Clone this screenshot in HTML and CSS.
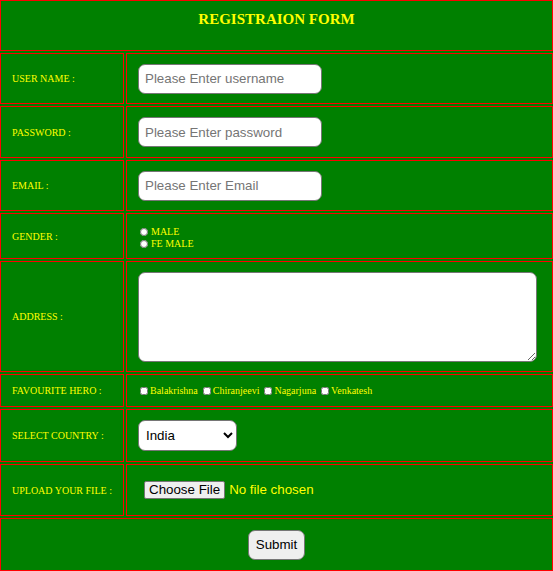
FILE: index.html
```html
<!DOCTYPE html>
<html>
<head>
<meta charset="utf-8">
<title>Registration Form</title>
<link rel="stylesheet" href="styles.css">
</head>
<body>
<form class="form">
  <div class="cell head">REGISTRAION FORM</div>

  <div class="cell label">USER NAME :</div>
  <div class="cell field"><input class="text" type="text" placeholder="Please Enter username"></div>

  <div class="cell label">PASSWORD :</div>
  <div class="cell field"><input class="text" type="password" placeholder="Please Enter password"></div>

  <div class="cell label">EMAIL :</div>
  <div class="cell field"><input class="text" type="email" placeholder="Please Enter Email"></div>

  <div class="cell label">GENDER :</div>
  <div class="cell field">
    <div class="radios">
      <label class="opt"><input class="radio" type="radio" name="g">MALE</label>
      <label class="opt"><input class="radio" type="radio" name="g">FE MALE</label>
    </div>
  </div>

  <div class="cell label">ADDRESS :</div>
  <div class="cell field"><textarea class="area"></textarea></div>

  <div class="cell label">FAVOURITE HERO :</div>
  <div class="cell field">
    <div class="checks">
      <label class="chk"><input class="box" type="checkbox">Balakrishna</label>
      <label class="chk"><input class="box" type="checkbox">Chiranjeevi</label>
      <label class="chk"><input class="box" type="checkbox">Nagarjuna</label>
      <label class="chk"><input class="box" type="checkbox">Venkatesh</label>
    </div>
  </div>

  <div class="cell label">SELECT COUNTRY :</div>
  <div class="cell field">
    <select class="sel">
      <option>India</option>
      <option>USA</option>
      <option>UK</option>
    </select>
  </div>

  <div class="cell label">UPLOAD YOUR FILE :</div>
  <div class="cell field"><input class="file" type="file"></div>

  <div class="cell foot"><button class="submit" type="button">Submit</button></div>
</form>
</body>
</html>
```
FILE: styles.css
```css
html, body {
  margin: 0;
  padding: 0;
  background: #008000;
}

.form {
  display: grid;
  grid-template-columns: 124px 427px;
  grid-template-rows: 51px 51px 52px 51px 46px 111px 33px 53px 52px 53px;
  gap: 2px;
  width: 553px;
  background: #008000;
  font-family: "Liberation Serif", "Times New Roman", serif;
  color: #ffff00;
}

.cell {
  box-sizing: border-box;
  border: 1px solid #ff0000;
  display: flex;
  align-items: center;
  padding-left: 11px;
}

.head {
  grid-column: 1 / span 2;
  justify-content: center;
  align-items: flex-start;
  padding: 10px 0 0 0;
  font-size: 15px;
  font-weight: bold;
  line-height: 17px;
}

.label {
  font-size: 10px;
}

.foot {
  grid-column: 1 / span 2;
  justify-content: center;
  padding: 0;
}

.text {
  box-sizing: border-box;
  width: 184px;
  height: 30px;
  padding: 0 6px;
  border: 1px solid #767676;
  border-radius: 7px;
  background: #ffffff;
  font-family: "Liberation Sans", Arial, sans-serif;
  font-size: 13.333px;
  color: #000;
  outline: none;
}

.text::placeholder {
  color: #757575;
}

.radios {
  display: flex;
  flex-direction: column;
  margin-top: 4px;
  font-size: 10px;
  line-height: 12px;
}

.opt {
  display: flex;
  align-items: center;
}

.radio {
  width: 8px;
  height: 8px;
  margin: 0 3px 0 2px;
}

.area {
  box-sizing: border-box;
  width: 399px;
  height: 90px;
  border: 1px solid #767676;
  border-radius: 7px;
  background: #fff;
}

.checks {
  display: flex;
  align-items: center;
  font-size: 10px;
  line-height: 12px;
}

.chk {
  display: flex;
  align-items: center;
  margin-right: 3px;
}

.box {
  width: 8px;
  height: 8px;
  margin: 0 2px 0 2px;
}

.sel {
  box-sizing: border-box;
  width: 99px;
  height: 31px;
  padding: 0 3px;
  border: 1px solid #767676;
  border-radius: 7px;
  background: #fff;
  font-family: "Liberation Sans", Arial, sans-serif;
  font-size: 13.333px;
  color: #000;
}

.file {
  padding-left: 6px;
  font-family: "Liberation Sans", Arial, sans-serif;
  font-size: 13.333px;
  color: #ffff00;
}

.file::file-selector-button {
  box-sizing: border-box;
  height: 18px;
  padding: 0 4px;
  margin: 0 4px 0 0;
  border: 1px solid #767676;
  border-radius: 2px;
  background: #efefef;
  color: #000;
  font-family: "Liberation Sans", Arial, sans-serif;
  font-size: 13.333px;
  line-height: 14px;
}

.submit {
  box-sizing: border-box;
  width: 57px;
  height: 30px;
  padding: 0;
  border: 1px solid #767676;
  border-radius: 7px;
  background: #efefef;
  font-family: "Liberation Sans", Arial, sans-serif;
  font-size: 13.333px;
  color: #000;
}
```
